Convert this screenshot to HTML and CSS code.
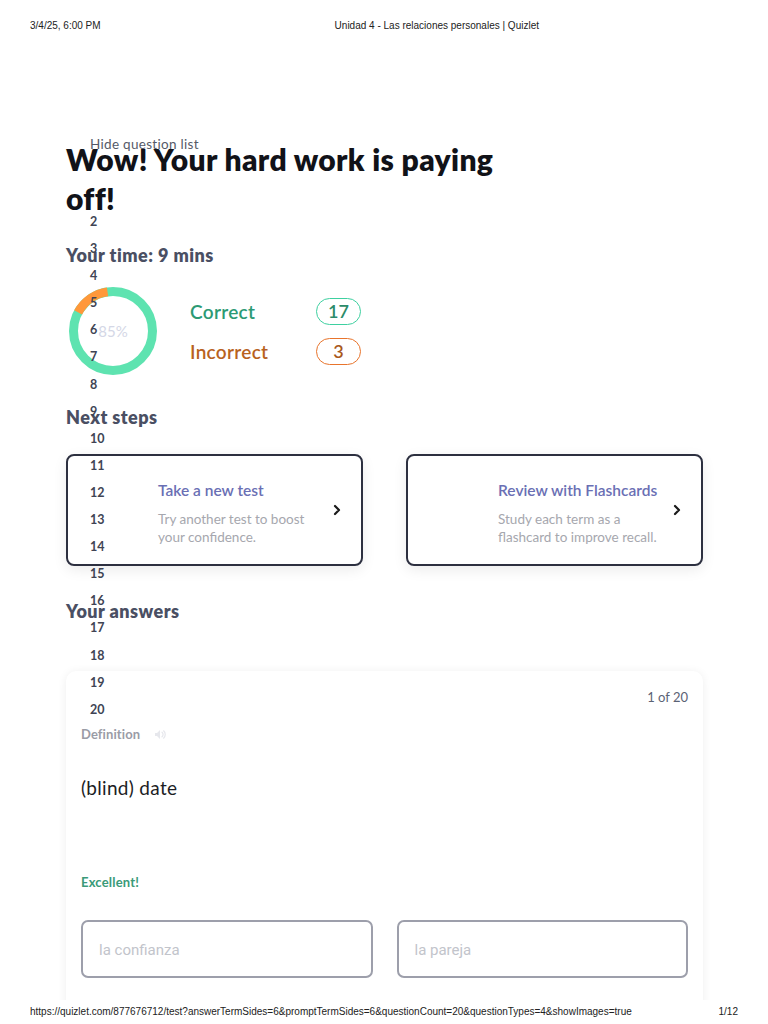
FILE: index.html
```html
<!DOCTYPE html>
<html lang="en">
<head>
<meta charset="utf-8">
<title>Unidad 4 - Las relaciones personales | Quizlet</title>
<link rel="stylesheet" href="styles.css">
</head>
<body>
<header class="print-head">
  <span class="print-date">3/4/25, 6:00 PM</span>
  <span class="print-title">Unidad 4 - Las relaciones personales | Quizlet</span>
</header>

<main class="page">
  <section class="results">
    <h1 class="headline">Wow! Your hard work is paying off!</h1>
    <h2 class="section-title time-title">Your time: 9 mins</h2>

    <div class="stats">
      <div class="donut">
        <svg width="88" height="88" viewBox="0 0 88 88">
          <circle cx="44" cy="44" r="39.5" fill="none" stroke="#5ee3b0" stroke-width="9"/>
          <circle cx="44" cy="44" r="39.5" fill="none" stroke="#ff983a" stroke-width="9"
            stroke-dasharray="37.2 211" transform="rotate(-152 44 44)"/>
        </svg>
        <span class="donut-label">85%</span>
      </div>
      <div class="stat-rows">
        <div class="stat-row">
          <span class="stat-name correct">Correct</span>
          <span class="pill pill-correct">17</span>
        </div>
        <div class="stat-row">
          <span class="stat-name incorrect">Incorrect</span>
          <span class="pill pill-incorrect">3</span>
        </div>
      </div>
    </div>

    <h2 class="section-title next-title">Next steps</h2>
    <div class="next-cards">
      <div class="next-card">
        <div class="next-text">
          <div class="next-name">Take a new test</div>
          <div class="next-desc">Try another test to boost your confidence.</div>
        </div>
        <svg class="chev" width="8" height="12" viewBox="0 0 8 12"><path d="M2 2l4 4-4 4" fill="none" stroke="#1a1a1a" stroke-width="2.2" stroke-linecap="round" stroke-linejoin="round"/></svg>
      </div>
      <div class="next-card">
        <div class="next-text">
          <div class="next-name">Review with Flashcards</div>
          <div class="next-desc">Study each term as a flashcard to improve recall.</div>
        </div>
        <svg class="chev" width="8" height="12" viewBox="0 0 8 12"><path d="M2 2l4 4-4 4" fill="none" stroke="#1a1a1a" stroke-width="2.2" stroke-linecap="round" stroke-linejoin="round"/></svg>
      </div>
    </div>

    <h2 class="section-title answers-title">Your answers</h2>

    <article class="answer-card">
      <div class="answer-top"><span class="counter">1 of 20</span></div>
      <div class="def-row">
        <span class="def-label">Definition</span>
        <svg class="speaker" width="12" height="11" viewBox="0 0 12 11"><path d="M1 4h2l3-3v9l-3-3H1z" fill="#e6e7ec"/><path d="M8 3.2a3 3 0 0 1 0 4.6M9.6 1.8a5 5 0 0 1 0 7.4" fill="none" stroke="#e6e7ec" stroke-width="1.2" stroke-linecap="round"/></svg>
      </div>
      <div class="prompt">(blind) date</div>
      <div class="feedback">Excellent!</div>
      <div class="options">
        <div class="option">la confianza</div>
        <div class="option">la pareja</div>
      </div>
    </article>
  </section>

  <nav class="question-list">
    <div class="hide-link">Hide question list</div>
    <ol class="q-nums">
      <li>2</li><li>3</li><li>4</li><li>5</li><li>6</li><li>7</li><li>8</li><li>9</li><li>10</li><li>11</li><li>12</li><li>13</li><li>14</li><li>15</li><li>16</li><li>17</li><li>18</li><li>19</li><li>20</li>
    </ol>
  </nav>
</main>

<footer class="print-foot">
  <span class="print-url">https://quizlet.com/877676712/test?answerTermSides=6&amp;promptTermSides=6&amp;questionCount=20&amp;questionTypes=4&amp;showImages=true</span>
  <span class="print-page">1/12</span>
</footer>
</body>
</html>
```

FILE: styles.css
```css
* { box-sizing: border-box; }

html, body {
  margin: 0;
  padding: 0;
  background: #ffffff;
}

body {
  width: 768px;
  height: 1024px;
  overflow: hidden;
  display: flex;
  flex-direction: column;
  font-family: Lato, "Open Sans", sans-serif;
}

.print-head,
.print-foot {
  font-family: "Liberation Sans", Arial, sans-serif;
  font-size: 10px;
  color: #222;
  display: flex;
  align-items: center;
  padding: 0 30px;
  flex: none;
}

.print-head {
  height: 50px;
}

.print-title {
  margin-left: 234px;
}

.print-foot {
  height: 24px;
  justify-content: space-between;
  padding-bottom: 2px;
}

.page {
  position: relative;
  flex: 1;
  overflow: hidden;
  padding: 90px 65px 0 66px;
}

.headline {
  margin: 0;
  width: 470px;
  font-size: 30px;
  line-height: 39px;
  font-weight: 800;
  color: #111218;
  letter-spacing: 0.35px;
}

.section-title {
  margin: 0;
  font-size: 18px;
  line-height: 24px;
  font-weight: 800;
  color: #4a4f63;
  letter-spacing: 0.45px;
}

.time-title { margin-top: 25px; }

.stats {
  margin-top: 20px;
  display: flex;
  align-items: center;
  gap: 33px;
  height: 88px;
}

.donut {
  position: relative;
  width: 88px;
  height: 88px;
  margin-left: 3px;
}

.donut svg { display: block; }

.donut-label {
  position: absolute;
  inset: 0;
  display: flex;
  align-items: center;
  justify-content: center;
  font-size: 15px;
  color: #d4d7e6;
}

.stat-rows {
  display: flex;
  flex-direction: column;
  gap: 13px;
}

.stat-row {
  display: flex;
  align-items: center;
  height: 27px;
}

.stat-name {
  width: 126px;
  font-size: 19px;
  font-weight: 600;
  letter-spacing: 0.3px;
}

.correct { color: #2c9a74; }
.incorrect { color: #b8621e; }

.pill {
  width: 45px;
  height: 27px;
  border-radius: 14px;
  border: 1.5px solid;
  display: flex;
  align-items: center;
  justify-content: center;
  font-size: 18px;
  font-weight: 600;
}

.pill-correct { border-color: #3ed0a0; color: #2c8b6a; }
.pill-incorrect { border-color: #e8742c; color: #a8581b; }

.next-title { margin-top: 30px; }

.next-cards {
  margin-top: 25px;
  display: flex;
  gap: 43px;
}

.next-card {
  width: 297px;
  height: 112px;
  border: 2px solid #2d3040;
  border-radius: 8px;
  box-shadow: 0 4px 14px rgba(0, 0, 0, 0.08);
  display: flex;
  align-items: center;
  padding: 0 20px 0 90px;
}

.next-text {
  flex: 1;
  padding-top: 4px;
}

.next-name {
  font-size: 15.5px;
  line-height: 22px;
  font-weight: 600;
  color: #6a6fb4;
}

.next-desc {
  margin-top: 9px;
  width: 172px;
  font-size: 13.5px;
  line-height: 18px;
  color: #a6a7ae;
}

.chev { flex: none; }

.answers-title { margin-top: 33px; }

.answer-card {
  margin-top: 48px;
  width: 637px;
  height: 400px;
  border-radius: 10px;
  background: #fff;
  box-shadow: 0 1px 10px rgba(0, 0, 0, 0.07);
  padding: 16px 15px 0 15px;
}

.answer-top {
  display: flex;
  justify-content: flex-end;
  height: 20px;
  align-items: center;
}

.counter {
  font-size: 13px;
  color: #5b6275;
}

.def-row {
  margin-top: 17px;
  height: 20px;
  display: flex;
  align-items: center;
  gap: 14px;
}

.def-label {
  font-size: 13px;
  font-weight: 700;
  color: #9a9ca6;
  letter-spacing: 0.1px;
}

.prompt {
  margin-top: 32px;
  font-size: 19px;
  line-height: 24px;
  color: #1c1d24;
  letter-spacing: 0.3px;
}

.feedback {
  margin-top: 73px;
  font-size: 13px;
  line-height: 18px;
  font-weight: 700;
  color: #3a9a78;
  letter-spacing: 0.2px;
}

.options {
  margin-top: 29px;
  display: flex;
  gap: 24px;
}

.option {
  flex: 1;
  height: 58px;
  border: 2px solid #9d9fab;
  border-radius: 7px;
  display: flex;
  align-items: center;
  padding-left: 16px;
  padding-top: 1px;
  font-family: Roboto, "Liberation Sans", sans-serif;
  font-size: 15px;
  color: #c2c4cb;
}

.question-list {
  position: absolute;
  left: 90px;
  top: 87px;
  font-size: 12.5px;
  color: #404454;
}

.hide-link {
  font-size: 13.5px;
  line-height: 14px;
  color: #555a68;
  letter-spacing: 0.3px;
}

.q-nums {
  list-style: none;
  margin: 64px 0 0 0;
  padding: 0;
}

.q-nums li {
  height: 27.1px;
  line-height: 14px;
  font-weight: 700;
}
```
